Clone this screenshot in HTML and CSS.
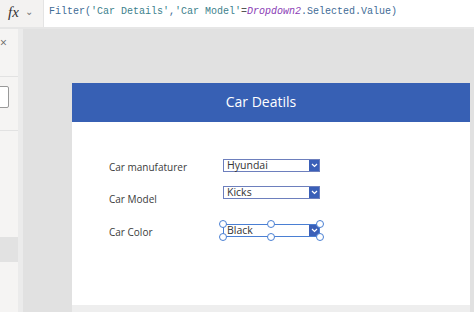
FILE: index.html
```html
<!DOCTYPE html>
<html>
	<head>
		<meta charset="utf-8">
		<title>Car Deatils</title>
		<link rel="stylesheet" href="styles.css">
	</head>
	<body>
		<div class="formula">
			<div class="fx"><span class="fx-sign">fx</span><span class="fx-arrow">&#8964;</span></div>
			<div class="code"><span class="fn">Filter(</span><span class="str">'Car Details'</span><span class="fn">,</span><span class="str">'Car Model'</span><span class="op">=</span><span class="ctl">Dropdown2</span><span class="fn">.Selected.Value)</span></div>
		</div>
		<div class="main">
			<div class="side">
				<div class="close">&times;</div>
				<div class="side-line"></div>
				<div class="side-box"></div>
				<div class="side-line second"></div>
				<div class="side-band"></div>
			</div>
			<div class="strip"></div>
			<div class="canvas">
				<div class="card">
					<div class="card-head">Car Deatils</div>
					<div class="card-body">
						<div class="row row-1">
							<div class="label">Car manufaturer</div>
							<div class="drop">
								<span class="value">Hyundai</span>
								<span class="btn"><svg width="7" height="5" viewBox="0 0 7 5"><path d="M1 1 L3.5 3.5 L6 1" fill="none" stroke="#fff" stroke-width="1.2"/></svg></span>
							</div>
						</div>
						<div class="row row-2">
							<div class="label">Car Model</div>
							<div class="drop">
								<span class="value">Kicks</span>
								<span class="btn"><svg width="7" height="5" viewBox="0 0 7 5"><path d="M1 1 L3.5 3.5 L6 1" fill="none" stroke="#fff" stroke-width="1.2"/></svg></span>
							</div>
						</div>
						<div class="row row-3">
							<div class="label">Car Color</div>
							<div class="drop selected">
								<span class="value">Black</span>
								<span class="btn"><svg width="7" height="5" viewBox="0 0 7 5"><path d="M1 1 L3.5 3.5 L6 1" fill="none" stroke="#fff" stroke-width="1.2"/></svg></span>
								<i class="h tl"></i><i class="h tm"></i><i class="h tr"></i>
								<i class="h bl"></i><i class="h bm"></i><i class="h br"></i>
							</div>
						</div>
					</div>
				</div>
				<div class="scroll"></div>
			</div>
		</div>
	</body>
</html>
```
FILE: styles.css
```css
body{
	margin: 0;
	width: 474px;
	height: 312px;
	overflow: hidden;
	font-family: "Open Sans", "Noto Sans", sans-serif;
	background: #e1e1e1;
}
.formula{
	height: 27px;
	display: flex;
	background: #fff;
	border-bottom: 2px solid #e6e6e6;
}
.fx{
	width: 44px;
	background: #f3f2f1;
	border-right: 1px solid #e4e4e4;
	display: flex;
	align-items: center;
	padding-left: 8px;
	box-sizing: border-box;
	color: #333;
}
.fx-sign{
	font-family: "Liberation Serif", serif;
	font-style: italic;
	font-size: 15px;
	margin-top: -2px;
}
.fx-arrow{
	font-size: 10px;
	color: #777;
	margin-left: 6px;
	margin-top: -6px;
}
.code{
	font-family: "Liberation Mono", monospace;
	font-size: 10px;
	line-height: 24px;
	padding-left: 5px;
	color: #3f6c96;
	white-space: nowrap;
}
.str{
	color: #3d7f8c;
}
.op{
	color: #555;
}
.ctl{
	color: #8a3bb5;
	font-style: italic;
}
.main{
	display: flex;
	height: 283px;
}
.side{
	width: 18px;
	background: #f5f4f3;
	overflow: hidden;
}
.close{
	font-size: 12px;
	color: #666;
	margin: 8px 0 0 0;
	line-height: 12px;
}
.side-line{
	height: 1px;
	background: #e2e2e2;
	margin-top: 27px;
}
.side-line.second{
	margin-top: 22px;
}
.side-box{
	width: 12px;
	height: 20px;
	margin: 9px 0 0 -5px;
	border: 1px solid #999;
	background: #fff;
	border-radius: 2px;
}
.side-band{
	height: 25px;
	background: #e2e2e2;
	margin-top: 106px;
}
.strip{
	width: 5px;
	background: #ebebeb;
}
.canvas{
	flex: 1;
	display: flex;
	flex-direction: column;
	padding: 54px 4px 0 49px;
}
.card{
	height: 222px;
	background: #fff;
	display: flex;
	flex-direction: column;
}
.card-head{
	height: 39px;
	background: #3760b4;
	color: #fff;
	font-size: 14px;
	line-height: 38px;
	text-align: center;
	padding-right: 20px;
}
.card-body{
	padding: 37px 0 0 37px;
}
.row{
	display: flex;
	align-items: flex-start;
}
.row-1{
	height: 27px;
}
.row-2{
	height: 38px;
}
.label{
	width: 114px;
	font-size: 10px;
	line-height: 14px;
	color: #3b3b3b;
	margin-top: 1px;
}
.row-2 .label{
	margin-top: 6px;
}
.drop{
	width: 97px;
	height: 13px;
	box-sizing: border-box;
	border: 1px solid #6d7fbd;
	display: flex;
	position: relative;
}
.value{
	flex: 1;
	font-size: 10.5px;
	line-height: 11px;
	padding-left: 3px;
	color: #333;
}
.btn{
	width: 10px;
	background: #3a5fb8;
	display: flex;
	align-items: center;
	justify-content: center;
}
.selected{
	border-color: #4a7fd3;
}
.h{
	position: absolute;
	width: 6px;
	height: 6px;
	border: 1px solid #4a7fd3;
	border-radius: 50%;
	background: #fff;
}
.tl{ left: -5px; top: -5px; }
.tm{ left: 43px; top: -5px; }
.tr{ right: -5px; top: -5px; }
.bl{ left: -5px; bottom: -5px; }
.bm{ left: 43px; bottom: -5px; }
.br{ right: -5px; bottom: -5px; }
.scroll{
	flex: 1;
	background: #eeeeee;
}
```
